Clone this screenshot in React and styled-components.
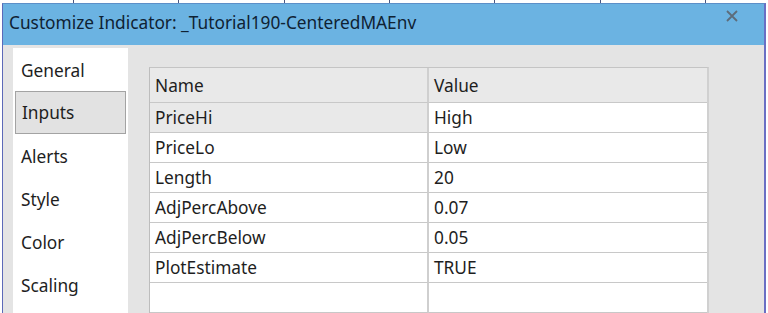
import React from "react";
import styled, { createGlobalStyle } from "styled-components";

const Global = createGlobalStyle`
  html, body { margin: 0; padding: 0; background: #ffffff; overflow: hidden; }
  body { font-family: "Noto Sans", "Open Sans", sans-serif; }
  * { box-sizing: border-box; }
`;

const Backdrop = styled.div`
  width: 768px;
  height: 313px;
  padding: 3px 2px 0 2px;
  background-color: #ffffff;
  background-image: repeating-linear-gradient(
    to right,
    transparent 0px,
    transparent 73px,
    #4a5680 73px,
    #4a5680 74px,
    transparent 74px,
    transparent 105.3px
  );
  background-size: 100% 4px;
  background-repeat: no-repeat;
  overflow: hidden;
`;

const Dialog = styled.div`
  height: 100%;
  display: flex;
  flex-direction: column;
  border-left: 1px solid #5c69b8;
  border-right: 2px solid #6a6fc4;
  border-top: 1px solid #5c8fc8;
  background: #e4e4e4;
`;

const TitleBar = styled.div`
  height: 41px;
  flex: none;
  display: flex;
  align-items: center;
  justify-content: space-between;
  padding: 0 26px 4px 6px;
  background: #6bb3e2;
`;

const Title = styled.span`
  font-size: 17.3px;
  color: #0f2233;
`;

const Close = styled.span`
  width: 12px;
  height: 12px;
  margin-bottom: 14px;
  display: flex;
`;

const Body = styled.div`
  flex: 1;
  display: flex;
  gap: 21px;
  padding: 3px 0 0 10px;
  min-height: 0;
`;

const TabList = styled.div`
  width: 115px;
  flex: none;
  background: #ffffff;
  display: flex;
  flex-direction: column;
  padding-top: 1px;
`;

const Tab = styled.div`
  height: 43px;
  display: flex;
  align-items: center;
  padding-left: ${(p) => (p.$active ? "6px" : "8px")};
  margin: ${(p) => (p.$active ? "-1px 2px 1px 2px" : "0")};
  font-size: 17.3px;
  color: #1e1e1e;
  background: ${(p) => (p.$active ? "#e2e2e2" : "transparent")};
  border: ${(p) => (p.$active ? "1px solid #a3a3a3" : "none")};
`;

const TableWrap = styled.div`
  padding-top: 19px;
`;

const Table = styled.div`
  width: 560px;
  display: grid;
  grid-template-columns: 279px 1fr;
  border-top: 1px solid #c4c4c4;
  border-left: 1px solid #bdbdbd;
  border-right: 2px solid #d0d0d0;
`;

const Cell = styled.div`
  height: ${(p) => (p.$header ? "35px" : "30px")};
  display: flex;
  align-items: center;
  padding-left: 5px;
  font-size: 17.3px;
  color: #1e1e1e;
  background: ${(p) => (p.$shade ? "#e9e9e9" : "#ffffff")};
  border-bottom: 1px solid #c8c8c8;
  border-right: ${(p) => (p.$first ? "2px solid #cfcfcf" : "none")};
`;

const tabs = ["General", "Inputs", "Alerts", "Style", "Color", "Scaling"];
const rows = [
  ["PriceHi", "High"],
  ["PriceLo", "Low"],
  ["Length", "20"],
  ["AdjPercAbove", "0.07"],
  ["AdjPercBelow", "0.05"],
  ["PlotEstimate", "TRUE"],
  ["", ""],
];

export default function App() {
  return (
    <>
      <Global />
      <Backdrop>
        <Dialog>
          <TitleBar>
            <Title>Customize Indicator: _Tutorial190-CenteredMAEnv</Title>
            <Close>
              <svg width="12" height="12" viewBox="0 0 12 12">
                <path d="M1 1 L11 11 M11 1 L1 11" stroke="#5d6c7a" strokeWidth="1.8" />
              </svg>
            </Close>
          </TitleBar>
          <Body>
            <TabList>
              {tabs.map((t) => (
                <Tab key={t} $active={t === "Inputs"}>
                  {t}
                </Tab>
              ))}
            </TabList>
            <TableWrap>
              <Table>
                <Cell $header $shade $first>Name</Cell>
                <Cell $header $shade>Value</Cell>
                {rows.map(([n, v], i) => (
                  <React.Fragment key={i}>
                    <Cell $first $shade={i === 0}>{n}</Cell>
                    <Cell>{v}</Cell>
                  </React.Fragment>
                ))}
              </Table>
            </TableWrap>
          </Body>
        </Dialog>
      </Backdrop>
    </>
  );
}
